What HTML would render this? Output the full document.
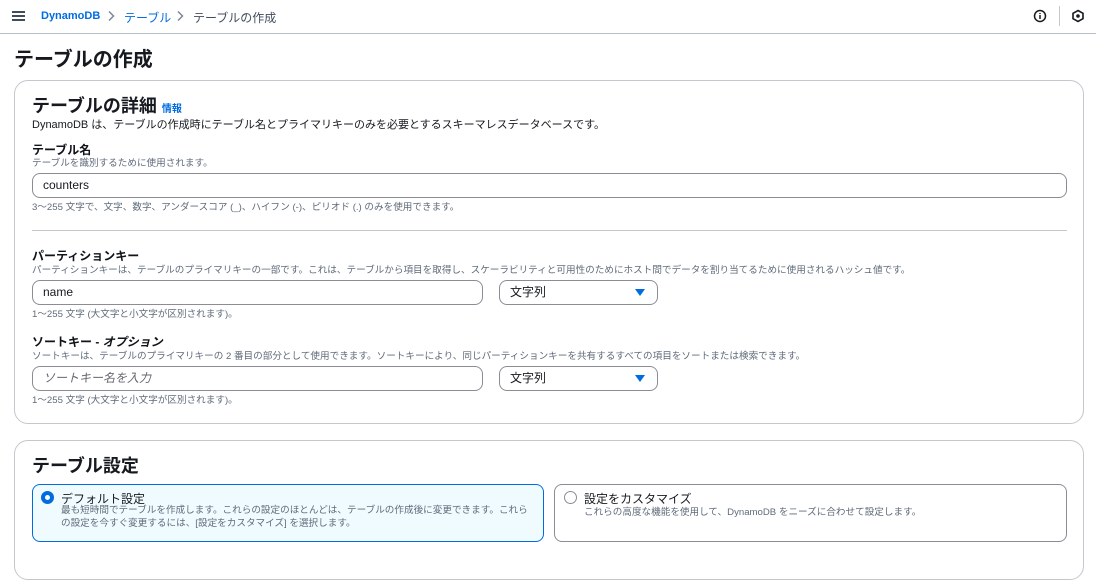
<!DOCTYPE html>
<html><head><meta charset="utf-8"><style>
*{box-sizing:border-box;margin:0;padding:0}
body{width:1096px;height:558px;overflow:hidden;background:#fff;font-family:"Liberation Sans","Noto Sans CJK JP",sans-serif;color:#16191f;position:relative}
.a{position:absolute;white-space:nowrap}
.top{position:absolute;left:0;top:0;width:1096px;height:34px;border-bottom:1px solid #b6bec9}
.card{position:absolute;left:14px;width:1070px;border:1px solid #c6c6cd;border-radius:14px;background:#fff}
.lbl{font-size:12px;font-weight:bold;color:#0f141a}
.hint{font-size:9.6px;color:#5f6b7a}
.con{font-size:9.6px;color:#5f6b7a}
.inp{position:absolute;height:25px;border:1px solid #8c8c94;border-radius:8px;font-size:12px;padding-left:10px;line-height:23px}
.sel{position:absolute;width:159px;height:25px;border:1px solid #8c8c94;border-radius:8px;font-size:12px;padding-left:10px;line-height:23px}
.sel:after{content:"";position:absolute;right:12px;top:8px;border-left:5px solid transparent;border-right:5px solid transparent;border-top:7px solid #006ce0}
</style></head><body>
<div class="top"></div>
<div class="a" style="left:12px;top:11px;width:13px;height:2px;background:#414d5c;box-shadow:0 4px 0 #414d5c,0 8px 0 #414d5c"></div>
<div class="a" style="left:41px;top:10px;font-size:11px;font-weight:bold;color:#006ce0">DynamoDB</div>
<svg class="a" style="left:107px;top:10px" width="8" height="12"><path d="M2 1.5L6.5 6L2 10.5" fill="none" stroke="#7d8998" stroke-width="1.5"/></svg>
<div class="a" style="left:124px;top:9px;font-size:12px;color:#006ce0">テーブル</div>
<svg class="a" style="left:176px;top:10px" width="8" height="12"><path d="M2 1.5L6.5 6L2 10.5" fill="none" stroke="#7d8998" stroke-width="1.5"/></svg>
<div class="a" style="left:193px;top:9px;font-size:12px;color:#414d5c">テーブルの作成</div>
<svg class="a" style="left:1033px;top:9px" width="14" height="14"><circle cx="7" cy="7" r="5.5" fill="none" stroke="#16191f" stroke-width="1.5"/><path d="M7 6v4M7 4v1" stroke="#16191f" stroke-width="1.5"/></svg>
<div class="a" style="left:1059px;top:6px;width:1px;height:20px;background:#c6c6cd"></div>
<svg class="a" style="left:1071px;top:9px" width="14" height="14"><path d="M7 1.5L12 4.3V9.7L7 12.5L2 9.7V4.3Z" fill="none" stroke="#16191f" stroke-width="1.6"/><circle cx="7" cy="7" r="1.8" fill="#16191f"/></svg>
<div class="a" style="left:14px;top:43px;font-size:20px;font-weight:bold">テーブルの作成</div>

<div class="card" style="top:80px;height:344px"></div>
<div class="a" style="left:32px;top:92px;font-size:18px;font-weight:bold">テーブルの詳細 <span style="font-size:10px;color:#006ce0">情報</span></div>
<div class="a" style="left:32px;top:116px;font-size:11px">DynamoDB は、テーブルの作成時にテーブル名とプライマリキーのみを必要とするスキーマレスデータベースです。</div>
<div class="a lbl" style="left:32px;top:141px">テーブル名</div>
<div class="a hint" style="left:32px;top:155px">テーブルを識別するために使用されます。</div>
<div class="inp" style="left:32px;top:173px;width:1035px">counters</div>
<div class="a con" style="left:32px;top:199px">3〜255 文字で、文字、数字、アンダースコア (_)、ハイフン (-)、ピリオド (.) のみを使用できます。</div>
<div class="a" style="left:32px;top:230px;width:1035px;height:1px;background:#c6c6cd"></div>
<div class="a lbl" style="left:32px;top:247px">パーティションキー</div>
<div class="a hint" style="left:32px;top:262px">パーティションキーは、テーブルのプライマリキーの一部です。これは、テーブルから項目を取得し、スケーラビリティと可用性のためにホスト間でデータを割り当てるために使用されるハッシュ値です。</div>
<div class="inp" style="left:32px;top:280px;width:451px">name</div>
<div class="sel" style="left:499px;top:280px">文字列</div>
<div class="a con" style="left:32px;top:306px">1〜255 文字 (大文字と小文字が区別されます)。</div>
<div class="a lbl" style="left:32px;top:333px">ソートキー - <i>オプション</i></div>
<div class="a hint" style="left:32px;top:348px">ソートキーは、テーブルのプライマリキーの 2 番目の部分として使用できます。ソートキーにより、同じパーティションキーを共有するすべての項目をソートまたは検索できます。</div>
<div class="inp" style="left:32px;top:366px;width:451px;color:#656871;font-style:italic">ソートキー名を入力</div>
<div class="sel" style="left:499px;top:366px">文字列</div>
<div class="a con" style="left:32px;top:392px">1〜255 文字 (大文字と小文字が区別されます)。</div>

<div class="card" style="top:440px;height:140px"></div>
<div class="a" style="left:32px;top:452px;font-size:18px;font-weight:bold">テーブル設定</div>
<div class="a" style="left:32px;top:484px;width:512px;height:58px;border:1px solid #006ce0;border-radius:8px;background:#f0fbff"></div>
<div class="a" style="left:41px;top:491px;width:13px;height:13px;border-radius:50%;border:4px solid #006ce0;background:#fff"></div>
<div class="a" style="left:61px;top:490px;font-size:12px">デフォルト設定</div>
<div class="a" style="left:61px;top:504px;font-size:9.6px;color:#5f6b7a;line-height:13px">最も短時間でテーブルを作成します。これらの設定のほとんどは、テーブルの作成後に変更できます。これら<br>の設定を今すぐ変更するには、[設定をカスタマイズ] を選択します。</div>
<div class="a" style="left:554px;top:484px;width:513px;height:58px;border:1px solid #8c8c94;border-radius:8px"></div>
<div class="a" style="left:564px;top:491px;width:13px;height:13px;border-radius:50%;border:1.5px solid #8c8c94"></div>
<div class="a" style="left:584px;top:490px;font-size:12px">設定をカスタマイズ</div>
<div class="a" style="left:584px;top:504px;font-size:9.6px;color:#5f6b7a">これらの高度な機能を使用して、DynamoDB をニーズに合わせて設定します。</div>
</body></html>
